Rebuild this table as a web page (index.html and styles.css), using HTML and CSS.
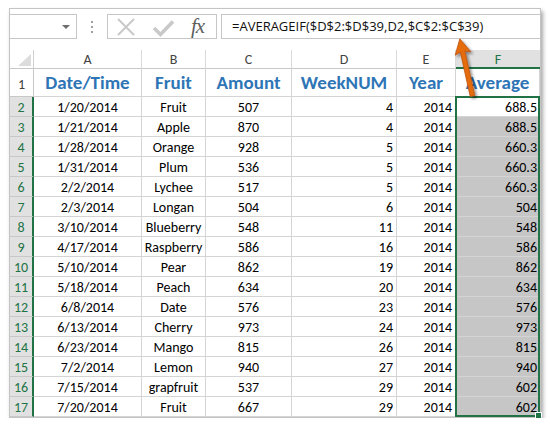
FILE: index.html
```html
<!DOCTYPE html>
<html>
<head>
<meta charset="utf-8">
<link rel="stylesheet" href="styles.css">
</head>
<body>
<div class="window">
  <div class="fbar">
    <div class="namebox"><span class="dd"></span></div>
    <div class="grip"><i></i><i></i><i></i></div>
    <div class="btns">
      <svg class="xck" width="80" height="25" viewBox="0 0 80 25">
        <path d="M10 5 L26 21 M26 5 L10 21" stroke="#c9c9c9" stroke-width="2" fill="none"/>
        <path d="M46 14 L52.5 20.5 L65 7.5" stroke="#c9c9c9" stroke-width="3.6" fill="none"/>
      </svg>
      <span class="fx">fx</span>
    </div>
    <div class="formula">=AVERAGEIF($D$2:$D$39,D2,$C$2:$C$39)</div>
  </div>
  <div class="sheet">
    <div class="corner"><svg width="23" height="18" viewBox="0 0 23 18"><polygon points="21,4 21,16 8,16" fill="#dcdcdc"/></svg></div>
    <div class="ch">A</div><div class="ch">B</div><div class="ch">C</div><div class="ch">D</div><div class="ch">E</div><div class="ch sel">F</div>

    <div class="rh r1">1</div><div class="c h">Date/Time</div><div class="c h">Fruit</div><div class="c h">Amount</div><div class="c h">WeekNUM</div><div class="c h">Year</div><div class="c h">Average</div>

    <div class="rh">2</div><div class="c">1/20/2014</div><div class="c">Fruit</div><div class="c">507</div><div class="c n">4</div><div class="c n">2014</div><div class="c n act">688.5</div>
    <div class="rh">3</div><div class="c">1/21/2014</div><div class="c">Apple</div><div class="c">870</div><div class="c n">4</div><div class="c n">2014</div><div class="c n g">688.5</div>
    <div class="rh">4</div><div class="c">1/28/2014</div><div class="c">Orange</div><div class="c">928</div><div class="c n">5</div><div class="c n">2014</div><div class="c n g">660.3</div>
    <div class="rh">5</div><div class="c">1/31/2014</div><div class="c">Plum</div><div class="c">536</div><div class="c n">5</div><div class="c n">2014</div><div class="c n g">660.3</div>
    <div class="rh">6</div><div class="c">2/2/2014</div><div class="c">Lychee</div><div class="c">517</div><div class="c n">5</div><div class="c n">2014</div><div class="c n g">660.3</div>
    <div class="rh">7</div><div class="c">2/3/2014</div><div class="c">Longan</div><div class="c">504</div><div class="c n">6</div><div class="c n">2014</div><div class="c n g">504</div>
    <div class="rh">8</div><div class="c">3/10/2014</div><div class="c">Blueberry</div><div class="c">548</div><div class="c n">11</div><div class="c n">2014</div><div class="c n g">548</div>
    <div class="rh">9</div><div class="c">4/17/2014</div><div class="c">Raspberry</div><div class="c">586</div><div class="c n">16</div><div class="c n">2014</div><div class="c n g">586</div>
    <div class="rh">10</div><div class="c">5/10/2014</div><div class="c">Pear</div><div class="c">862</div><div class="c n">19</div><div class="c n">2014</div><div class="c n g">862</div>
    <div class="rh">11</div><div class="c">5/18/2014</div><div class="c">Peach</div><div class="c">634</div><div class="c n">20</div><div class="c n">2014</div><div class="c n g">634</div>
    <div class="rh">12</div><div class="c">6/8/2014</div><div class="c">Date</div><div class="c">576</div><div class="c n">23</div><div class="c n">2014</div><div class="c n g">576</div>
    <div class="rh">13</div><div class="c">6/13/2014</div><div class="c">Cherry</div><div class="c">973</div><div class="c n">24</div><div class="c n">2014</div><div class="c n g">973</div>
    <div class="rh">14</div><div class="c">6/23/2014</div><div class="c">Mango</div><div class="c">815</div><div class="c n">26</div><div class="c n">2014</div><div class="c n g">815</div>
    <div class="rh">15</div><div class="c">7/2/2014</div><div class="c">Lemon</div><div class="c">940</div><div class="c n">27</div><div class="c n">2014</div><div class="c n g">940</div>
    <div class="rh">16</div><div class="c">7/15/2014</div><div class="c">grapfruit</div><div class="c">537</div><div class="c n">29</div><div class="c n">2014</div><div class="c n g">602</div>
    <div class="rh">17</div><div class="c">7/20/2014</div><div class="c">Fruit</div><div class="c">667</div><div class="c n">29</div><div class="c n">2014</div><div class="c n g">602</div>

    <div class="selbox"><span class="handle"></span></div>
  </div>
</div>
<svg class="arrow" width="550" height="433" viewBox="0 0 550 433">
  <defs>
    <filter id="sh" x="-50%" y="-50%" width="200%" height="200%">
      <feDropShadow dx="2" dy="2" stdDeviation="1.4" flood-color="#000" flood-opacity="0.45"/>
    </filter>
  </defs>
  <polygon filter="url(#sh)" points="459.8,38.8 470.8,51.8 464.85,51 474.75,95.5 470.25,96.5 460.35,52 455.2,55.2" fill="#e46c0a" stroke="#c0520c" stroke-width="0.8" stroke-linejoin="round"/>
</svg>
</body>
</html>
```

FILE: styles.css
```css
html, body {
  margin: 0;
  padding: 0;
  background: #ffffff;
}
body {
  padding: 8px 0 0 9px;
  font-family: Calibri, Carlito, Lato, sans-serif;
}
.window {
  width: 530px;
  border: 1px solid #c4c4c4;
  background: #ffffff;
  box-shadow: 2px 3px 4px rgba(0, 0, 0, 0.35);
}
.fbar {
  display: flex;
  align-items: flex-start;
  height: 41px;
  padding-top: 5px;
  box-sizing: border-box;
}
.namebox {
  width: 67px;
  height: 25px;
  box-sizing: border-box;
  border: 1px solid #c6c6c6;
  border-left: none;
  display: flex;
  align-items: center;
  justify-content: flex-end;
  padding-right: 6px;
}
.dd {
  width: 0;
  height: 0;
  border-left: 4px solid transparent;
  border-right: 4px solid transparent;
  border-top: 4px solid #6e6e6e;
}
.grip {
  width: 30px;
  height: 25px;
  display: flex;
  flex-direction: column;
  align-items: center;
  justify-content: center;
  gap: 3px;
}
.grip i {
  display: block;
  width: 2px;
  height: 2px;
  background: #a0a0a0;
}
.btns {
  width: 110px;
  height: 25px;
  box-sizing: border-box;
  border: 1px solid #c6c6c6;
  display: flex;
  align-items: center;
}
.xck {
  display: block;
  margin-top: -1px;
}
.fx {
  font-family: "Liberation Serif", serif;
  font-style: italic;
  font-size: 21px;
  color: #5e5e5e;
  margin-left: 3px;
  line-height: 23px;
  letter-spacing: -1px;
}
.formula {
  flex: 1;
  margin-left: 4px;
  height: 25px;
  box-sizing: border-box;
  border: 1px solid #c6c6c6;
  border-right: none;
  font-family: "Open Sans", sans-serif;
  font-size: 13px;
  line-height: 23px;
  padding-left: 10px;
  color: #111;
  white-space: nowrap;
}
.sheet {
  display: grid;
  grid-template-columns: 24px 108px 64px 86px 105px 59px 84px;
  grid-template-rows: 19px 28px repeat(16, 20px);
  position: relative;
}
.sheet > div {
  box-sizing: border-box;
}
.corner {
  border-right: 1px solid #d0d0d0;
  border-bottom: 1px solid #c8c8c8;
  display: flex;
}
.ch {
  border-right: 1px solid #dadada;
  border-bottom: 1px solid #c8c8c8;
  font-size: 14px;
  color: #444;
  text-align: center;
  line-height: 19px;
}
.ch.sel {
  background: #e1e1e1;
  color: #217346;
  border-bottom: 2px solid #217346;
  border-right: none;
}
.rh {
  background: #e1e1e1;
  border-right: 2px solid #217346;
  border-bottom: 1px solid #c8c8c8;
  color: #217346;
  font-size: 14px;
  text-align: center;
  line-height: 20px;
  padding-top: 1px;
}
.rh.r1 {
  background: #ffffff;
  color: #444;
  border-right: 1px solid #c8c8c8;
  display: flex;
  align-items: flex-end;
  justify-content: center;
  padding-bottom: 1px;
}
.c {
  border-right: 1px solid #d4d4d4;
  border-bottom: 1px solid #d4d4d4;
  font-size: 14px;
  color: #000;
  text-align: center;
  line-height: 20px;
  padding-top: 1px;
  white-space: nowrap;
  overflow: hidden;
}
.c.h {
  font-weight: bold;
  font-size: 19px;
  color: #2e75b6;
  line-height: 24px;
  display: flex;
  align-items: flex-end;
  justify-content: center;
  padding-bottom: 1px;
}
.c.n {
  text-align: right;
  padding-right: 3px;
}
.c.g {
  background: #c6c6c6;
}
.c.act, .c.g {
  border-right: none;
}
.sheet > .selbox {
  position: absolute;
  grid-column: 7;
  grid-row: 3 / 19;
  top: -1px;
  left: -1px;
  right: 0;
  bottom: 0;
  border: 2px solid #217346;
  z-index: 2;
  pointer-events: none;
}
.handle {
  position: absolute;
  right: -4px;
  bottom: -4px;
  width: 5px;
  height: 5px;
  background: #217346;
  border: 1px solid #ffffff;
}
.arrow {
  position: absolute;
  left: 0;
  top: 0;
  pointer-events: none;
  z-index: 5;
}
```
